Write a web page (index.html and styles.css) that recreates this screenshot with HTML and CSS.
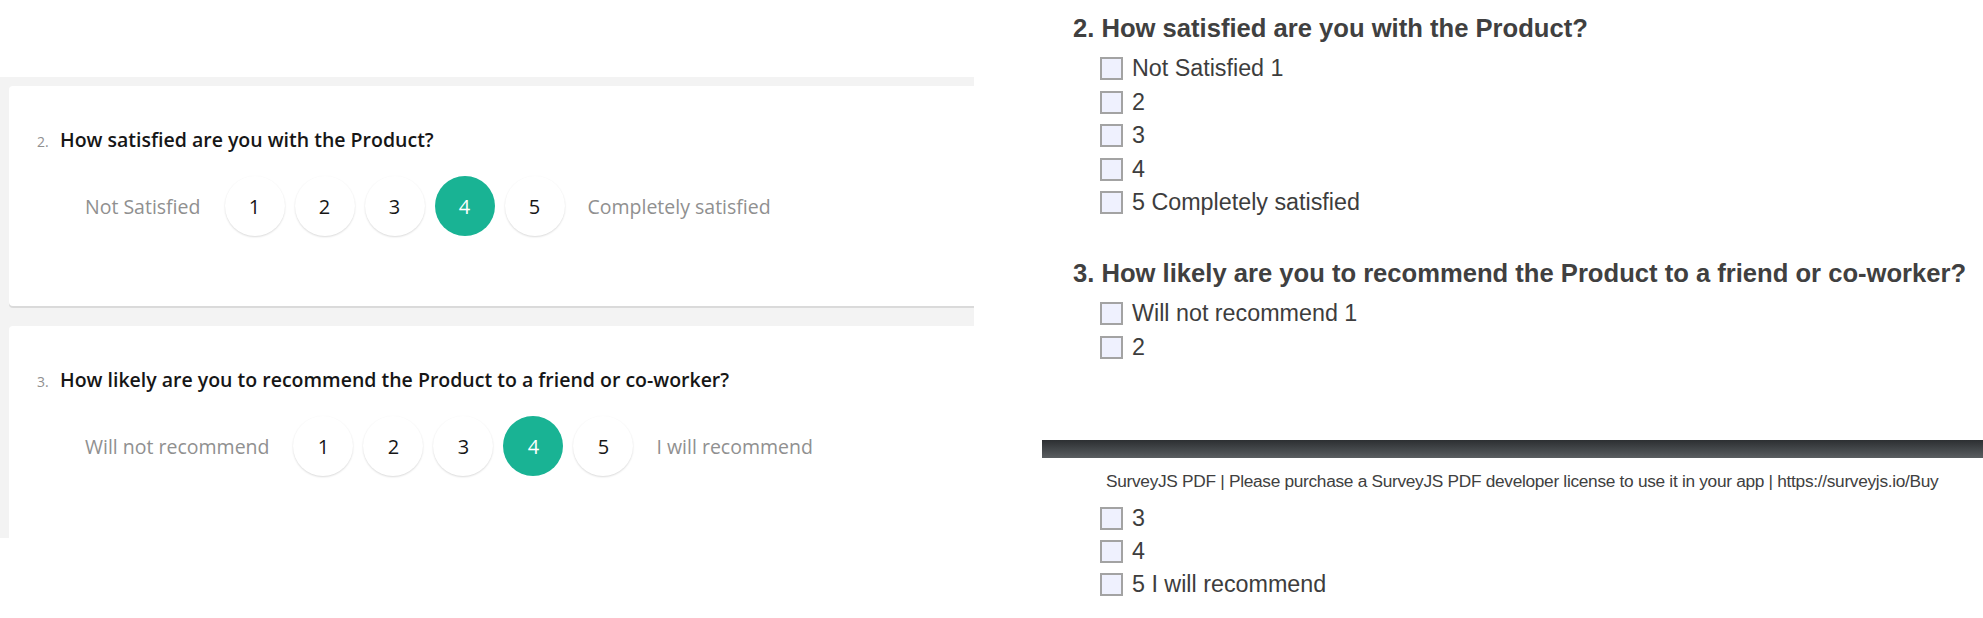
FILE: index.html
```html
<!DOCTYPE html>
<html>
<head>
<meta charset="utf-8">
<link rel="stylesheet" href="styles.css">
</head>
<body>
<div class="page">
  <div class="left">
    <div class="survey">
      <div class="card card-first">
        <div class="qtitle"><span class="qnum">2.</span><span class="qtext">How satisfied are you with the Product?</span></div>
        <div class="rating">
          <span class="minlabel">Not Satisfied</span>
          <span class="item">1</span>
          <span class="item">2</span>
          <span class="item">3</span>
          <span class="item item-on">4</span>
          <span class="item">5</span>
          <span class="maxlabel">Completely satisfied</span>
        </div>
      </div>
      <div class="card card-second">
        <div class="qtitle"><span class="qnum">3.</span><span class="qtext">How likely are you to recommend the Product to a friend or co-worker?</span></div>
        <div class="rating">
          <span class="minlabel">Will not recommend</span>
          <span class="item">1</span>
          <span class="item">2</span>
          <span class="item">3</span>
          <span class="item item-on">4</span>
          <span class="item">5</span>
          <span class="maxlabel">I will recommend</span>
        </div>
      </div>
    </div>
  </div>
  <div class="right">
    <div class="pdf-q pdf-q2">
      <div class="pdf-title">2. How satisfied are you with the Product?</div>
      <div class="opt"><span class="box"></span><span>Not Satisfied 1</span></div>
      <div class="opt"><span class="box"></span><span>2</span></div>
      <div class="opt"><span class="box"></span><span>3</span></div>
      <div class="opt"><span class="box"></span><span>4</span></div>
      <div class="opt"><span class="box"></span><span>5 Completely satisfied</span></div>
    </div>
    <div class="pdf-q pdf-q3">
      <div class="pdf-title">3. How likely are you to recommend the Product to a friend or co-worker?</div>
      <div class="opt"><span class="box"></span><span>Will not recommend 1</span></div>
      <div class="opt"><span class="box"></span><span>2</span></div>
    </div>
    <div class="pagebreak"></div>
    <div class="license">SurveyJS PDF | Please purchase a SurveyJS PDF developer license to use it in your app | https://surveyjs.io/Buy</div>
    <div class="pdf-q pdf-q3b">
      <div class="opt opt-b"><span class="box"></span><span>3</span></div>
      <div class="opt opt-b"><span class="box"></span><span>4</span></div>
      <div class="opt opt-b"><span class="box"></span><span>5 I will recommend</span></div>
    </div>
  </div>
</div>
</body>
</html>
```

FILE: styles.css
```css
html, body {
  margin: 0;
  padding: 0;
  background: #ffffff;
}
.page {
  display: flex;
  width: 1983px;
  height: 618px;
  overflow: hidden;
}
.left {
  width: 974px;
  flex: none;
  padding-top: 77px;
}
.survey {
  height: 461px;
  background: #f3f3f3;
  padding: 9px 0 0 9px;
  box-sizing: border-box;
  overflow: hidden;
  display: flex;
  flex-direction: column;
  gap: 20px;
}
.card {
  background: #ffffff;
  border-radius: 4px 0 0 4px;
  box-shadow: 0 2px 0 rgba(0, 0, 0, 0.1);
  padding: 40px 0 0 28px;
  box-sizing: border-box;
  font-family: "Open Sans", "Noto Sans", sans-serif;
  flex: none;
}
.card-first {
  height: 220px;
}
.card-second {
  height: 240px;
}
.qtitle {
  display: flex;
  align-items: baseline;
  height: 28px;
  line-height: 28px;
}
.qnum {
  font-size: 14px;
  color: #909090;
  width: 23px;
  flex: none;
}
.qtext {
  font-size: 19.5px;
  font-weight: 600;
  color: #161616;
}
.rating {
  display: flex;
  align-items: center;
  margin-top: 22px;
  padding-left: 48px;
  font-size: 19.5px;
}
.minlabel, .maxlabel {
  color: #909090;
}
.minlabel {
  margin-right: 14px;
}
.maxlabel {
  margin-left: 23px;
}
.item {
  width: 60px;
  height: 60px;
  border-radius: 50%;
  background: #ffffff;
  box-shadow: 0 1px 2px rgba(0, 0, 0, 0.15);
  display: flex;
  align-items: center;
  justify-content: center;
  color: #161616;
  font-size: 20px;
  margin-left: 10px;
  flex: none;
}
.item-on {
  background: #19b394;
  color: #ffffff;
  box-shadow: none;
}
.right {
  flex: 1;
  font-family: "Liberation Sans", Arial, sans-serif;
  color: #3d3d3d;
  padding-top: 13px;
}
.pdf-q {
  padding-left: 99px;
}
.pdf-title {
  font-size: 25.6px;
  font-weight: bold;
  line-height: 30px;
  color: #404040;
  margin-bottom: 9px;
}
.opt {
  display: flex;
  align-items: center;
  height: 33.5px;
  font-size: 23.3px;
  line-height: 33.5px;
}
.opt-b {
  height: 33px;
  line-height: 33px;
}
.box {
  width: 23px;
  height: 23px;
  box-sizing: border-box;
  border: 2px solid #a3a3a3;
  background: #eff1fe;
  margin: 0 9px 0 27px;
  flex: none;
}
.pdf-q3 {
  margin-top: 38.5px;
}
.pagebreak {
  margin: 76px 0 0 68px;
  height: 18px;
  background: linear-gradient(#2c2f32, #5a5e61);
}
.license {
  font-size: 17.3px;
  letter-spacing: -0.3px;
  line-height: 24px;
  margin-top: 11.3px;
  padding-left: 132px;
  color: #404040;
  white-space: nowrap;
}
.pdf-q3b {
  margin-top: 8.7px;
}
```
